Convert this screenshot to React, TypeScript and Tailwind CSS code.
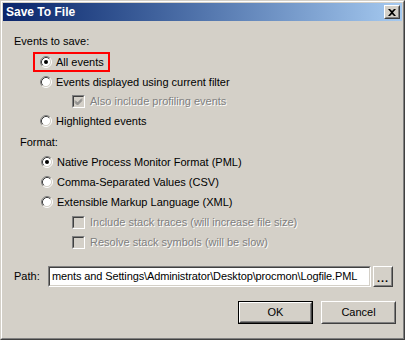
import React from "react";

const FACE = "#d4d0c8";

function Radio({ checked }: { checked?: boolean }) {
  return (
    <svg width="12" height="12" viewBox="0 0 12 12" className="shrink-0">
      <circle cx="6" cy="6" r="4.5" fill="#fff" />
      <path d="M2.11 9.89 A5.5 5.5 0 0 1 9.89 2.11" stroke="#808080" strokeWidth="1" fill="none" />
      <path d="M9.89 2.11 A5.5 5.5 0 0 1 2.11 9.89" stroke="#ffffff" strokeWidth="1" fill="none" />
      <path d="M2.82 9.18 A4.5 4.5 0 0 1 9.18 2.82" stroke="#404040" strokeWidth="1" fill="none" />
      <path d="M9.18 2.82 A4.5 4.5 0 0 1 2.82 9.18" stroke={FACE} strokeWidth="1" fill="none" />
      {checked && <circle cx="6" cy="6" r="2" fill="#000" />}
    </svg>
  );
}

function Check({ checked }: { checked?: boolean }) {
  return (
    <div className="w-[13px] h-[13px] shrink-0 border border-t-[#808080] border-l-[#808080] border-r-white border-b-white">
      <div className="w-full h-full border border-t-[#404040] border-l-[#404040] border-r-[#d4d0c8] border-b-[#d4d0c8] bg-[#d4d0c8]">
        {checked && (
          <svg width="9" height="9" viewBox="0 0 9 9">
            <path d="M1 3.5 L3.5 6 L8 1.5 M1 4.5 L3.5 7 L8 2.5 M1 5.5 L3.5 8 L8 3.5" stroke="#808080" strokeWidth="1" fill="none" />
          </svg>
        )}
      </div>
    </div>
  );
}

function Raised({ className, children, isDefault }: { className?: string; children: React.ReactNode; isDefault?: boolean }) {
  const inner = (
    <div className="w-full h-full border border-t-white border-l-white border-r-[#404040] border-b-[#404040]">
      <div className="w-full h-full border border-t-[#d4d0c8] border-l-[#d4d0c8] border-r-[#808080] border-b-[#808080] flex items-center justify-center">
        {children}
      </div>
    </div>
  );
  if (isDefault) {
    return <div className={`border border-black ${className ?? ""}`}>{inner}</div>;
  }
  return <div className={className}>{inner}</div>;
}

const disabled = "text-[#808080] [text-shadow:1px_1px_0_#fff]";

export default function App() {
  return (
    <div
      className="w-[405px] h-[340px] bg-[#d4d0c8] text-black text-[11px] leading-none select-none"
      style={{ fontFamily: '"Liberation Sans", Arial, sans-serif' }}
    >
      <div className="w-full h-full border border-t-[#d4d0c8] border-l-[#d4d0c8] border-r-[#404040] border-b-[#404040]">
        <div className="w-full h-full border border-t-white border-l-white border-r-[#808080] border-b-[#808080] p-px flex flex-col">
          {/* title bar */}
          <div className="h-[18px] flex items-center pl-[3px] pr-[2px] bg-gradient-to-r from-[#0a246a] to-[#a6caf0]">
            <span className="text-white font-bold text-[12px] flex-1">Save To File</span>
            <Raised className="w-[16px] h-[14px] bg-[#d4d0c8]">
              <svg width="8" height="7" viewBox="0 0 8 7">
                <path d="M0 0h2l2 2 2-2h2L5 3.5 8 7H6L4 5 2 7H0l3-3.5z" fill="#000" />
              </svg>
            </Raised>
          </div>

          {/* body */}
          <div className="flex flex-col pt-[10px]">
            <div className="h-[21px] flex items-center pl-[11px]">Events to save:</div>

            <div className="h-[20px] flex items-center pl-[30px]">
              <div className="h-[20px] w-[77px] border-2 border-[#ff0000] flex items-center gap-[4px] pl-[5px]">
                <Radio checked />
                <span>All events</span>
              </div>
            </div>
            <div className="h-[20px] flex items-center gap-[4px] pl-[37px]">
              <Radio />
              <span>Events displayed using current filter</span>
            </div>
            <div className="h-[19px] flex items-center gap-[5px] pl-[69px]">
              <Check checked />
              <span className={disabled}>Also include profiling events</span>
            </div>
            <div className="h-[20px] flex items-center gap-[4px] pl-[37px]">
              <Radio />
              <span>Highlighted events</span>
            </div>

            <div className="h-[19px] mt-[2px] flex items-center pl-[17px]">Format:</div>
            <div className="h-[20px] flex items-center gap-[4px] pl-[38px]">
              <Radio checked />
              <span>Native Process Monitor Format (PML)</span>
            </div>
            <div className="h-[20px] flex items-center gap-[4px] pl-[38px]">
              <Radio />
              <span>Comma-Separated Values (CSV)</span>
            </div>
            <div className="h-[20px] flex items-center gap-[4px] pl-[38px]">
              <Radio />
              <span>Extensible Markup Language (XML)</span>
            </div>
            <div className="h-[20px] flex items-center gap-[5px] pl-[69px]">
              <Check />
              <span className={disabled}>Include stack traces (will increase file size)</span>
            </div>
            <div className="h-[20px] flex items-center gap-[5px] pl-[69px]">
              <Check />
              <span className={disabled}>Resolve stack symbols (will be slow)</span>
            </div>

            {/* path */}
            <div className="h-[21px] mt-[14px] flex items-center pl-[11px]">
              <span className="w-[34px]">Path:</span>
              <div className="w-[323px] h-[21px] border border-t-[#808080] border-l-[#808080] border-r-white border-b-white">
                <div className="w-full h-full border border-t-[#404040] border-l-[#404040] border-r-[#d4d0c8] border-b-[#d4d0c8] bg-white flex items-center pl-[2px] overflow-hidden whitespace-nowrap tracking-[-0.12px]">
                  ments and Settings\Administrator\Desktop\procmon\Logfile.PML
                </div>
              </div>
              <Raised className="w-[20px] h-[21px] ml-[2px]">
                <span className="font-bold tracking-[1px] leading-none mt-[4px]">...</span>
              </Raised>
            </div>

            {/* buttons */}
            <div className="flex justify-end gap-[8px] mt-[14px] pr-[6px]">
              <Raised isDefault className="w-[75px] h-[23px]">
                <span>OK</span>
              </Raised>
              <Raised className="w-[75px] h-[23px]">
                <span>Cancel</span>
              </Raised>
            </div>
          </div>
        </div>
      </div>
    </div>
  );
}
